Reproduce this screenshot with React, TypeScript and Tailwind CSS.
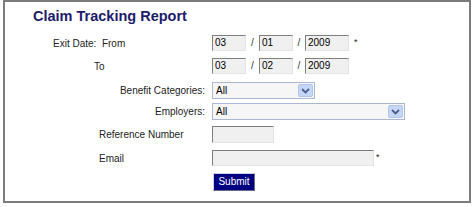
import React from "react";

const font = { fontFamily: '"Liberation Sans", Arial, sans-serif' };

function TextBox({ value = "", w }: { value?: string; w: string }) {
  return (
    <div
      className={`${w} h-[16px] bg-[#f0f0f0] border border-t-[#7f7f7f] border-l-[#7f7f7f] border-r-[#e4e4e4] border-b-[#e4e4e4] pl-[2px] text-[10px] leading-[14px] text-black`}
    >
      {value}
    </div>
  );
}

function Select({ w }: { w: string }) {
  return (
    <div className={`${w} h-[17px] flex items-stretch bg-[#f6f6f6] border border-[#a9b8cf] p-[1px]`}>
      <span className="flex-1 pl-[2px] text-[10px] leading-[13px] text-black">All</span>
      <span className="w-[15px] flex items-center justify-center bg-[#c6d6f7] border border-[#b3c4ea] rounded-[2px]">
        <svg width="9" height="6" viewBox="0 0 9 6">
          <path d="M1 1 L4.5 4.5 L8 1" fill="none" stroke="#4b5f8c" strokeWidth="1.8" />
        </svg>
      </span>
    </div>
  );
}

function Slash({ w }: { w: string }) {
  return <span className={`${w} text-center text-[10px] leading-[16px] text-[#333]`}>/</span>;
}

export default function App() {
  return (
    <div className="w-[474px] h-[207px] bg-white" style={font}>
      <div className="ml-[3px] w-[468px] h-[203px] border-2 border-[#7c7c7c] text-[10px] text-[#222]">
        <h1 className="ml-[28px] mt-[5px] text-[14.5px] leading-[18px] font-bold text-[#1c1c6b]">
          Claim Tracking Report
        </h1>

        <div className="mt-[10px] flex items-center h-[16px]">
          <span className="w-[207px] pl-[48px]">Exit Date:&nbsp; From</span>
          <TextBox value="03" w="w-[34px]" />
          <Slash w="w-[13px]" />
          <TextBox value="01" w="w-[34px]" />
          <Slash w="w-[12px]" />
          <TextBox value="2009" w="w-[44px]" />
          <span className="ml-[5px] text-[9px]">*</span>
        </div>

        <div className="mt-[7px] flex items-center h-[16px]">
          <span className="w-[207px] pl-[89px]">To</span>
          <TextBox value="03" w="w-[34px]" />
          <Slash w="w-[13px]" />
          <TextBox value="02" w="w-[34px]" />
          <Slash w="w-[12px]" />
          <TextBox value="2009" w="w-[44px]" />
        </div>

        <div className="mt-[8px] flex items-center h-[17px]">
          <span className="w-[207px] pr-[7px] text-right">Benefit Categories:</span>
          <Select w="w-[103px]" />
        </div>

        <div className="mt-[4px] flex items-center h-[17px]">
          <span className="w-[207px] pr-[7px] text-right">Employers:</span>
          <Select w="w-[193px]" />
        </div>

        <div className="mt-[6px] flex items-center h-[17px]">
          <span className="w-[207px] pl-[94px]">Reference Number</span>
          <TextBox w="w-[62px] h-[17px]" />
        </div>

        <div className="mt-[7px] flex items-center h-[16px]">
          <span className="w-[207px] pl-[94px]">Email</span>
          <TextBox w="w-[162px]" />
          <span className="ml-[2px] text-[9px]">*</span>
        </div>

        <div className="mt-[7px] flex items-center h-[18px]">
          <span className="w-[208px]" />
          <button className="w-[42px] h-[18px] bg-[#000080] text-white text-[10px] leading-[14px] border border-t-[#d0d0e8] border-l-[#d0d0e8] border-r-[#6a6a8a] border-b-[#6a6a8a]">
            Submit
          </button>
        </div>
      </div>
    </div>
  );
}
